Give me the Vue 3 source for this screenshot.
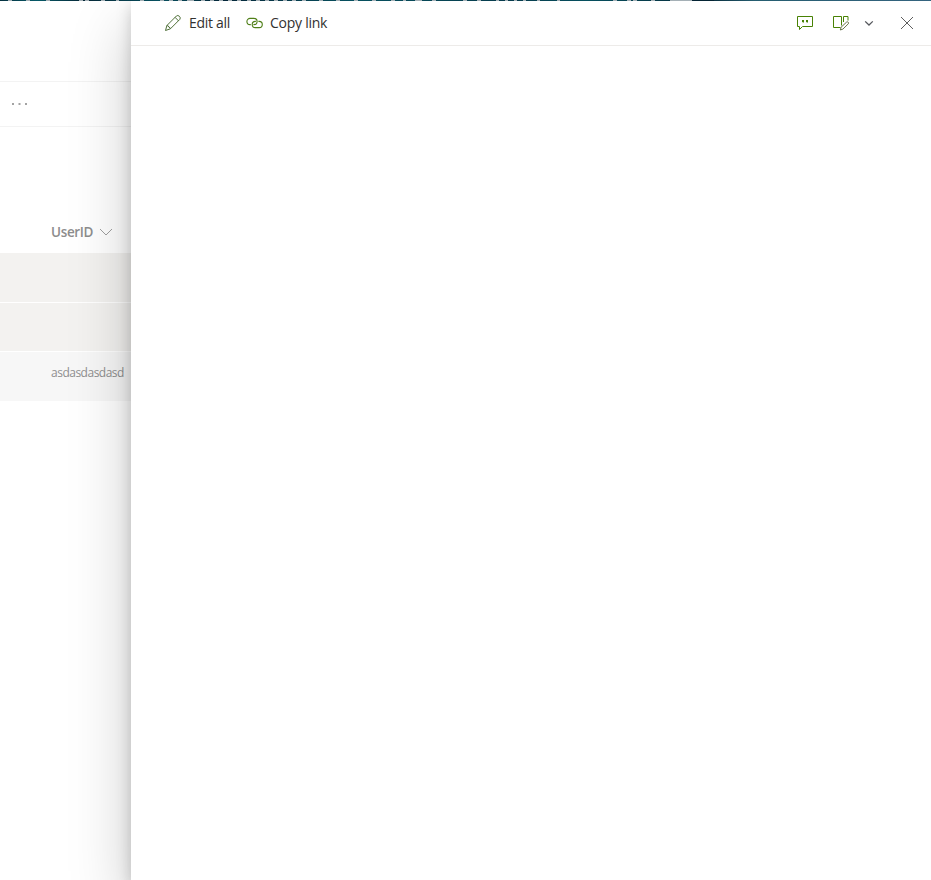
<script setup>
const marks = [
  [8, 4], [26, 4], [46, 4], [79, 4], [85, 4], [101, 4], [116, 3], [140, 4], [160, 4], [169, 4],
  [178, 4], [187, 7], [201, 4], [210, 4], [219, 4], [228, 4], [237, 4], [247, 4], [256, 4],
  [265, 4], [274, 4], [283, 4], [292, 4], [302, 4], [319, 4], [336, 4], [354, 4], [372, 4],
  [391, 4], [403, 3], [415, 7], [432, 4], [463, 4], [477, 4], [496, 3], [505, 3], [514, 3],
  [523, 3], [537, 3], [557, 3], [613, 4], [627, 4], [633, 4], [651, 4], [670, 22],
]
const rows = [
  { value: '', tone: 'selected' },
  { value: '', tone: 'selected' },
  { value: 'asdasdasdasd', tone: 'hovered' },
]
</script>

<template>
  <div class="page">
    <svg class="banner" width="931" height="1" viewBox="0 0 931 1" aria-hidden="true">
      <defs>
        <linearGradient id="sea">
          <stop offset="0" stop-color="#04303f" /><stop offset=".04" stop-color="#075a68" />
          <stop offset=".09" stop-color="#052737" /><stop offset=".17" stop-color="#07505f" />
          <stop offset=".24" stop-color="#032538" /><stop offset=".38" stop-color="#075160" />
          <stop offset=".55" stop-color="#063b4c" /><stop offset=".63" stop-color="#06505f" />
          <stop offset=".76" stop-color="#062b3a" /><stop offset=".81" stop-color="#255d70" />
          <stop offset="1" stop-color="#35647f" />
        </linearGradient>
      </defs>
      <rect width="931" height="1" fill="url(#sea)" />
      <rect v-for="m in marks" :key="m[0]" :x="m[0]" :width="m[1]" height="1" fill="#a5b0b6" />
      <rect x="692" width="22" height="1" fill="#052434" />
    </svg>

    <div class="workspace">
      <main class="list">
        <div class="site-header"></div>
        <div class="command-bar">
          <svg width="18" height="4" viewBox="0 0 18 4" fill="#a3a3a3">
            <rect x="1" y="1" width="2" height="2" /><rect x="7.5" y="1" width="2" height="2" /><rect x="14" y="1" width="2" height="2" />
          </svg>
        </div>
        <div class="column-header">
          <span>UserID</span>
          <svg width="14" height="8" viewBox="0 0 14 8" fill="none" stroke="#a0a0a0"><path d="M1 1l6 6 6-6" /></svg>
        </div>
        <div v-for="(row, i) in rows" :key="i" class="row" :class="row.tone">{{ row.value }}</div>
      </main>

      <aside class="panel">
        <header class="toolbar">
          <button class="action edit">
            <svg width="18" height="18" viewBox="0 0 18 18" fill="none" stroke="#4f7038">
              <path d="M1.5 16.5l1.4-5L12.4 2q1.4-1.2 3 .3t.4 3.1L6.4 14.8z" />
              <path d="M11 3.3l3.7 3.7M2.9 11.5q1.8.1 2 1.7 1.5.2 1.5 1.6" />
            </svg>
            <span>Edit all</span>
          </button>
          <button class="action copy">
            <svg width="18" height="12" viewBox="0 0 18 12" fill="none" stroke="#4f7f18" stroke-width="1.1">
              <path d="M4.8 7.6H4A3.1 3.1 0 0 1 4 1.4h4a3.1 3.1 0 0 1 0 6.2h-.6" />
              <path d="M12.4 4.4h.8a3.1 3.1 0 0 1 0 6.2H9.3a3.1 3.1 0 0 1 0-6.2h.6" />
            </svg>
            <span>Copy link</span>
          </button>
          <span class="spacer"></span>
          <button class="icon comment" aria-label="Comments">
            <svg width="18" height="16" viewBox="0 0 18 16" fill="none" stroke="#498205">
              <path d="M1.5 1.5h15v10H6.5l-3 3v-3h-2z" />
              <path fill="#498205" stroke="none" d="M6 5h2v2L6.8 8.2V7H6zM10 5h2v2l-1.2 1.2V7H10z" />
            </svg>
          </button>
          <button class="icon form" aria-label="Edit form">
            <svg width="18" height="16" viewBox="0 0 18 16" fill="none" stroke="#498205">
              <path d="M8.5 12.5h-7v-11h8v9M11.5 7V1.5h4.5v4" />
              <path stroke="#68734b" d="M8.3 15l.8-2.8 5.5-5.1q.8-.6 1.6.1t.1 1.6l-5.4 5.3z" />
            </svg>
          </button>
          <button class="icon more" aria-label="More options">
            <svg width="10" height="7" viewBox="0 0 10 7" fill="none" stroke="#55575c" stroke-width="1.3"><path d="M1.2 1.4L5 5l3.8-3.6" /></svg>
          </button>
          <button class="icon close" aria-label="Close">
            <svg width="14" height="14" viewBox="0 0 14 14" fill="none" stroke="#5e5e5e"><path d="M1 1l12 12M13 1L1 13" /></svg>
          </button>
        </header>
      </aside>
    </div>
  </div>
</template>

<style>
body { margin: 0; background: #fff; overflow: hidden; }
</style>

<style scoped>
.page { width: 931px; height: 880px; overflow: hidden; font-family: "Open Sans", "Noto Sans", sans-serif; }
.banner { display: block; }
.workspace { display: flex; height: 879px; overflow: hidden; }
.list { width: 131px; flex: none; }
.site-header { height: 80px; border-bottom: 1px solid #f3f3f3; }
.command-bar { height: 44px; display: flex; align-items: center; padding-left: 11px; border-bottom: 1px solid #f3f3f3; }
.command-bar svg { margin-bottom: 1px; }
.column-header { height: 86px; margin-top: 40px; display: flex; align-items: flex-end; gap: 6px; box-sizing: border-box; padding: 0 0 12px 51px; font-size: 13.5px; line-height: 18px; font-weight: 600; letter-spacing: -.35px; color: #8d8d8d; }
.column-header svg { margin-bottom: 5px; }
.row { height: 49px; box-sizing: border-box; border-top: 1px solid #fff; padding: 13px 0 0 51px; font-size: 12px; line-height: 16px; letter-spacing: -.5px; color: #8f8f8f; white-space: nowrap; }
.row.selected { background: #f3f2f0; }
.column-header + .row { border-top-color: #f3f2f0; }
.row.hovered { height: 50px; background: #f7f7f7; }
.panel { position: relative; flex: 1; background: #fff; box-shadow: 0 25.6px 57.6px rgba(0, 0, 0, .22), 0 4.8px 14.4px rgba(0, 0, 0, .18); }
.toolbar { height: 44px; display: flex; align-items: center; padding: 0 17px 0 33px; border-bottom: 1px solid #edebe9; }
button { display: flex; align-items: center; padding: 0; border: 0; background: none; font: inherit; flex: none; }
.action { font-size: 14px; line-height: 20px; color: #323130; white-space: nowrap; }
.edit { width: 82px; gap: 7px; letter-spacing: -.3px; }
.copy { gap: 6px; letter-spacing: -.25px; }
.spacer { flex: 1; }
.comment { margin-right: 18px; }
.form { margin-right: 14px; }
.more { margin-right: 26px; }
</style>
